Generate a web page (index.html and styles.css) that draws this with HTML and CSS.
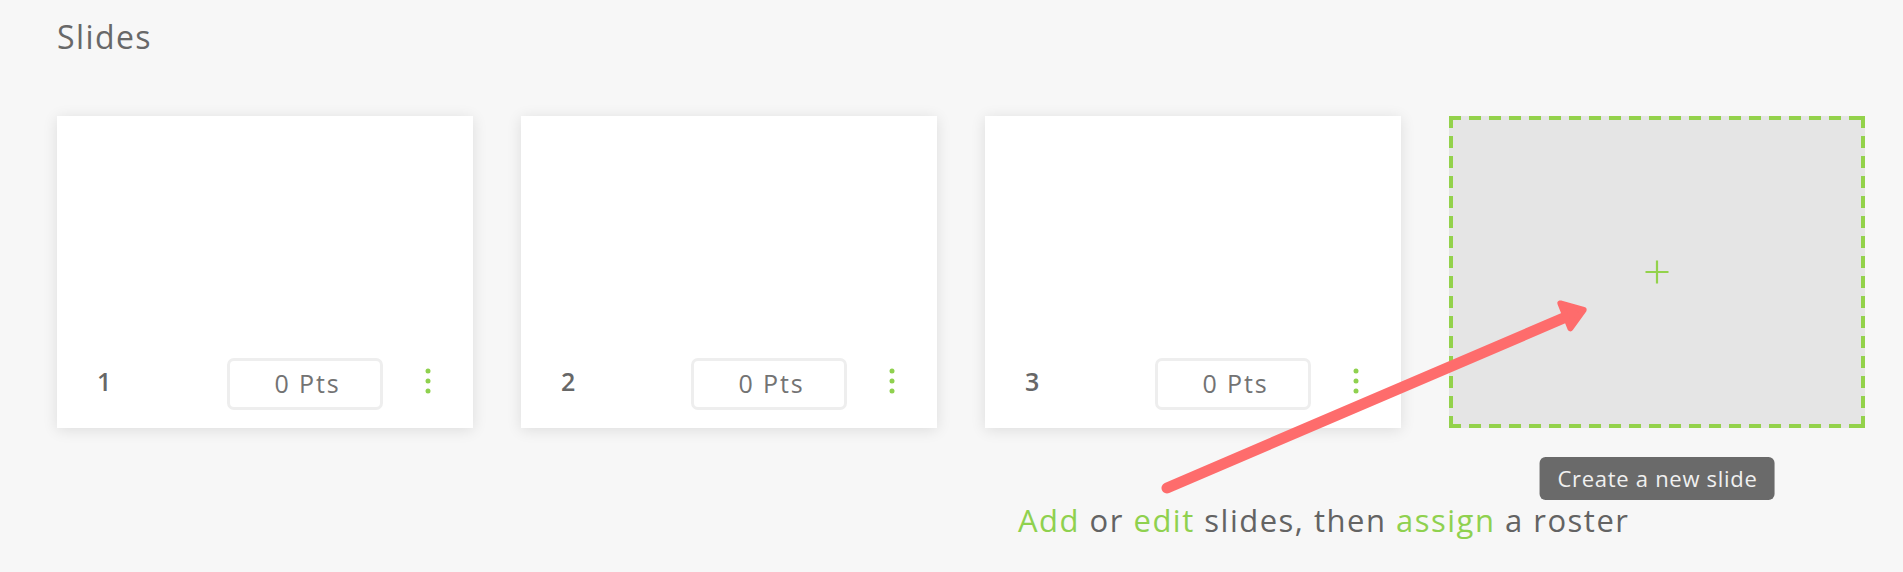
FILE: index.html
```html
<!DOCTYPE html>
<html lang="en">
<head>
<meta charset="utf-8">
<title>Slides</title>
<link rel="stylesheet" href="styles.css">
</head>
<body>
<main class="page">
  <h1 class="title">Slides</h1>
  <section class="slides">
    <article class="slide">
      <div class="slide-body"></div>
      <footer class="slide-foot">
        <span class="slide-num">1</span>
        <span class="pts">0 Pts</span>
        <button class="kebab" aria-label="More options">
          <svg width="6" height="26" viewBox="0 0 6 26"><circle cx="3" cy="3" r="2.5"/><circle cx="3" cy="13" r="2.5"/><circle cx="3" cy="23" r="2.5"/></svg>
        </button>
      </footer>
    </article>
    <article class="slide">
      <div class="slide-body"></div>
      <footer class="slide-foot">
        <span class="slide-num">2</span>
        <span class="pts">0 Pts</span>
        <button class="kebab" aria-label="More options">
          <svg width="6" height="26" viewBox="0 0 6 26"><circle cx="3" cy="3" r="2.5"/><circle cx="3" cy="13" r="2.5"/><circle cx="3" cy="23" r="2.5"/></svg>
        </button>
      </footer>
    </article>
    <article class="slide">
      <div class="slide-body"></div>
      <footer class="slide-foot">
        <span class="slide-num">3</span>
        <span class="pts">0 Pts</span>
        <button class="kebab" aria-label="More options">
          <svg width="6" height="26" viewBox="0 0 6 26"><circle cx="3" cy="3" r="2.5"/><circle cx="3" cy="13" r="2.5"/><circle cx="3" cy="23" r="2.5"/></svg>
        </button>
      </footer>
    </article>
    <div class="new-slide-wrap">
      <button class="new-slide" aria-label="Create a new slide">
        <svg width="24" height="24" viewBox="0 0 24 24"><path d="M12 0.5V23.5M0.5 12H23.5"/></svg>
      </button>
      <div class="tooltip">Create a new slide</div>
    </div>
  </section>
</main>
<div class="coach">
  <svg class="coach-arrow" width="1903" height="572" viewBox="0 0 1903 572">
    <line x1="1167" y1="488" x2="1566" y2="317" />
    <polygon points="1560.4,303.4 1583.6,309.9 1570.4,328.3" />
  </svg>
  <p class="coach-text"><span class="hl">Add</span> or <span class="hl">edit</span> slides, then <span class="hl">assign</span> a roster</p>
</div>
</body>
</html>
```

FILE: styles.css
```css
html, body {
  margin: 0;
  padding: 0;
}

body {
  background: #f7f7f7;
  font-family: "Open Sans", Lato, sans-serif;
  width: 1903px;
  height: 572px;
  overflow: hidden;
  position: relative;
}

.page {
  padding: 18px 0 0 57px;
}

.title {
  margin: 0;
  font-size: 32px;
  line-height: 38px;
  font-weight: 500;
  color: #686868;
  letter-spacing: 1.4px;
}

.slides {
  display: flex;
  gap: 48px;
  margin-top: 60px;
}

.slide {
  width: 416px;
  height: 312px;
  background: #ffffff;
  box-shadow: 0 2px 14px rgba(0, 0, 0, 0.11);
  display: flex;
  flex-direction: column;
}

.slide-body {
  flex: 1;
}

.slide-foot {
  display: flex;
  align-items: center;
  padding: 0 42px 18px 40px;
}

.slide-num {
  flex: 1;
  font-size: 25px;
  font-weight: 600;
  color: #676767;
  margin-bottom: 7px;
}

.pts {
  box-sizing: border-box;
  width: 156px;
  height: 52px;
  border: 3px solid #eeeeee;
  border-radius: 7px;
  display: flex;
  align-items: center;
  justify-content: center;
  font-size: 25px;
  color: #737373;
  letter-spacing: 1.9px;
  padding: 0 0 2px 5px;
}

.kebab {
  margin: 0 0 7px 42px;
  padding: 0;
  border: 0;
  background: none;
  width: 6px;
  height: 26px;
  display: flex;
}

.kebab circle {
  fill: #8fd14f;
}

.new-slide-wrap {
  position: relative;
  width: 416px;
  height: 312px;
}

.new-slide {
  box-sizing: border-box;
  width: 100%;
  height: 100%;
  margin: 0;
  padding: 0;
  border: 0;
  background-color: #e5e5e5;
  background-image:
    repeating-linear-gradient(90deg, #93d24b 0 12px, transparent 12px 20px),
    repeating-linear-gradient(90deg, #93d24b 0 12px, transparent 12px 20px),
    repeating-linear-gradient(180deg, #93d24b 0 12px, transparent 12px 20px),
    repeating-linear-gradient(180deg, #93d24b 0 12px, transparent 12px 20px);
  background-size: 100% 4px, 100% 4px, 4px 100%, 4px 100%;
  background-position: left top, left bottom, left top, right top;
  background-repeat: no-repeat;
  display: flex;
  align-items: center;
  justify-content: center;
}

.new-slide path {
  stroke: #93d24b;
  stroke-width: 2.2;
  fill: none;
}

.tooltip {
  position: absolute;
  top: 341px;
  left: 50%;
  transform: translateX(-50%);
  height: 43px;
  line-height: 42px;
  padding: 0 17px 0 18px;
  border-radius: 6px;
  background: #6a6a6a;
  color: #f0f0f0;
  font-size: 22px;
  letter-spacing: 0.7px;
  white-space: nowrap;
}

.coach {
  position: absolute;
  inset: 0;
  pointer-events: none;
}

.coach-arrow {
  position: absolute;
  left: 0;
  top: 0;
}

.coach-arrow line {
  stroke: #fe6c6c;
  stroke-width: 11;
  stroke-linecap: round;
}

.coach-arrow polygon {
  fill: #fe6c6c;
  stroke: #fe6c6c;
  stroke-width: 6;
  stroke-linejoin: round;
}

.coach-text {
  position: absolute;
  left: 1018px;
  top: 502px;
  margin: 0;
  font-size: 31px;
  line-height: 36px;
  font-weight: 500;
  color: #636363;
  letter-spacing: 1.5px;
  white-space: nowrap;
}

.hl {
  color: #8fd14f;
}
```
